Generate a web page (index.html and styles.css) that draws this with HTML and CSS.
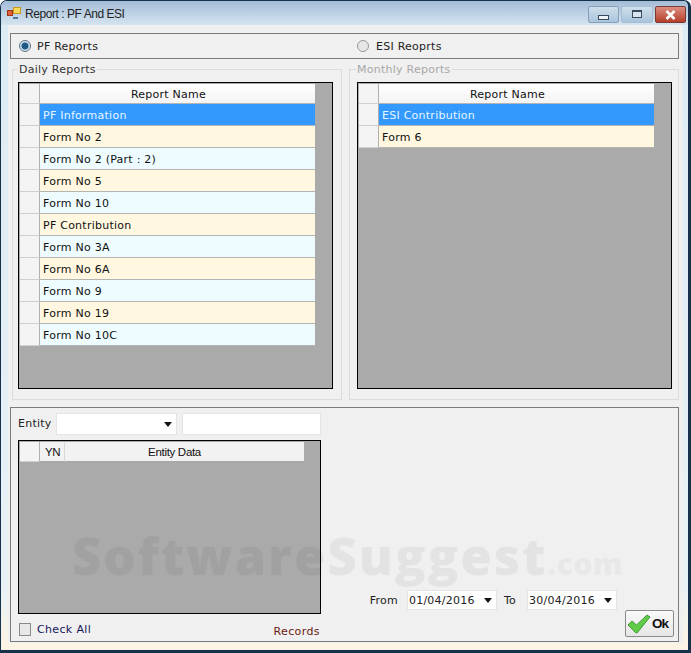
FILE: index.html
```html
<!DOCTYPE html>
<html>
<head>
<meta name="viewport" content="width=device-width, initial-scale=1">
<link rel="stylesheet" href="styles.css">
</head>
<body>

<div class="window">

    <div class="titlebar">
        <svg class="appIcon" width="14" height="13" viewBox="0 0 14 13">
            <rect x="0.5" y="3.5" width="5" height="5" fill="#e0603a" stroke="#9c3418"/>
            <rect x="6.5" y="0.5" width="7" height="6" fill="#fbd75a" stroke="#c79a24"/>
            <rect x="6" y="10" width="5" height="2" fill="#56789c"/>
        </svg>
        <span class="titleText">Report : PF And ESI</span>
        <div class="winBtns">
            <span class="winBtn"><i class="minIcon"></i></span>
            <span class="winBtn maxBtn"><i class="maxIcon"></i></span>
            <span class="winBtn closeBtn">
                <svg width="13" height="10" viewBox="0 0 13 10"><path d="M2.5 1 L10.5 9 M10.5 1 L2.5 9" stroke="#fff" stroke-width="2.6"/></svg>
            </span>
        </div>
    </div>

    <div class="client">

        <div class="radioPanel">
            <label class="radioItem radioFirst"><span class="radio checked"></span>PF Reports</label>
            <label class="radioItem"><span class="radio"></span>ESI Reoprts</label>
        </div>

        <div class="groups">
            <fieldset class="group groupDaily">
                <legend>Daily Reports</legend>
                <div class="grid">
                    <div class="row headRow"><div class="rowHead"></div><div class="cell headCell">Report Name</div></div>
                    <div class="row"><div class="rowHead"></div><div class="cell selected">PF Information</div></div>
                    <div class="row"><div class="rowHead"></div><div class="cell cream">Form No 2</div></div>
                    <div class="row"><div class="rowHead"></div><div class="cell ice">Form No 2 (Part : 2)</div></div>
                    <div class="row"><div class="rowHead"></div><div class="cell cream">Form No 5</div></div>
                    <div class="row"><div class="rowHead"></div><div class="cell ice">Form No 10</div></div>
                    <div class="row"><div class="rowHead"></div><div class="cell cream">PF Contribution</div></div>
                    <div class="row"><div class="rowHead"></div><div class="cell ice">Form No 3A</div></div>
                    <div class="row"><div class="rowHead"></div><div class="cell cream">Form No 6A</div></div>
                    <div class="row"><div class="rowHead"></div><div class="cell ice">Form No 9</div></div>
                    <div class="row"><div class="rowHead"></div><div class="cell cream">Form No 19</div></div>
                    <div class="row"><div class="rowHead"></div><div class="cell ice">Form No 10C</div></div>
                </div>
            </fieldset>

            <fieldset class="group groupMonthly">
                <legend class="disabled">Monthly Reports</legend>
                <div class="grid">
                    <div class="row headRow"><div class="rowHead"></div><div class="cell headCell">Report Name</div></div>
                    <div class="row"><div class="rowHead"></div><div class="cell selected">ESI Contribution</div></div>
                    <div class="row"><div class="rowHead"></div><div class="cell cream">Form 6</div></div>
                </div>
            </fieldset>
        </div>

        <div class="bottomPanel">
            <div class="entityCol">
                <div class="entityRow">
                    <span class="entityLabel">Entity</span>
                    <div class="combo entityCombo"><span class="arrow"></span></div>
                    <div class="textBox"></div>
                </div>
                <div class="grid entityGrid">
                    <div class="row entityHead">
                        <div class="rowHead"></div>
                        <div class="cell ynCell">YN</div>
                        <div class="cell dataCell">Entity Data</div>
                    </div>
                </div>
                <div class="entityFoot">
                    <label class="checkAll"><span class="checkbox"></span>Check All</label>
                    <span class="records">Records</span>
                </div>
            </div>

            <div class="actionCol">
                <div class="dateRow">
                    <span class="fromLabel">From</span>
                    <div class="combo dateCombo">01/04/2016<span class="arrow"></span></div>
                    <span class="toLabel">To</span>
                    <div class="combo dateCombo">30/04/2016<span class="arrow"></span></div>
                </div>
                <button class="okBtn">
                    <svg width="24" height="22" viewBox="0 0 24 22">
                        <path d="M1 12 L5 8 L9.5 12 L20 2 L23 4 L10 20 Q8 20 7 18 Z" fill="#62cc48" stroke="#3f9a34" stroke-width="1"/>
                    </svg>
                    Ok
                </button>
            </div>
        </div>

    </div>

    <!-- stock site watermark over the whole form -->
    <div class="watermark">SoftwareSuggest<span class="wmSmall">.com</span></div>
</div>

</body>
</html>
```
FILE: styles.css
```css
* {
    box-sizing: border-box;
}

body {
    margin: 0;
    font-family: "DejaVu Sans", Verdana, sans-serif;
    font-size: 11px;
    letter-spacing: 0.25px;
    color: #222;
}

.window {
    position: relative;
    width: 691px;
    height: 653px;
    overflow: hidden;
    background: linear-gradient(#dcebf4, #e8f1f6 90%, #fdf4e4);
    border: 1px solid #16314a;
    border-bottom-width: 3px;
    border-right-width: 3px;
    border-radius: 7px 7px 0 0;
}

/* Title bar */
.titlebar {
    display: flex;
    align-items: center;
    height: 24px;
    padding: 0 2px 0 6px;
    background: linear-gradient(#a3bcd6, #c2d5e7 60%, #d5e3ef);
}

.appIcon {
    margin-right: 4px;
}

.titleText {
    margin-top: 2px;
    font-family: "Liberation Sans", Arial, sans-serif;
    font-size: 12px;
    letter-spacing: -0.45px;
    color: #222;
}

.winBtns {
    display: flex;
    gap: 2px;
    margin-left: auto;
    margin-top: 3px;
}

.winBtn {
    display: flex;
    align-items: center;
    justify-content: center;
    width: 31px;
    height: 17px;
    background: linear-gradient(#cfdfec, #a9c4dc);
    border: 1px solid #86a0ba;
    border-radius: 2px;
}

.maxBtn {
    width: 32px;
    border-color: #a6bdd2;
}

.closeBtn {
    width: 31px;
    background: linear-gradient(#dc8e80, #b63e2a);
    border-color: #7c3a30;
}

.minIcon {
    width: 11px;
    height: 5px;
    margin-top: 5px;
    background: #eef3f7;
    border: 1px solid #3a4a5c;
}

.maxIcon {
    width: 10px;
    height: 8px;
    margin-bottom: 2px;
    border: 1px solid #3a4a5c;
    border-top-width: 2px;
    background: #d8e4ee;
}

/* Form area */
.client {
    height: 618px;
    margin: 0 5px 0 7px;
    padding: 8px 4px 0 2px;
    background: #f0f0f0;
}

.radioPanel {
    display: flex;
    align-items: center;
    height: 26px;
    border: 1px solid #7b7b7b;
}

.radioItem {
    display: flex;
    align-items: center;
    gap: 7px;
    padding-top: 1px;
}

.radioFirst {
    width: 346px;
    gap: 6px;
    padding-left: 8px;
}

.radio {
    width: 12px;
    height: 12px;
    margin-top: -1px;
    background: #e6e6e6;
    border: 1px solid #9a9a9a;
    border-radius: 50%;
}

.radio.checked {
    background: radial-gradient(circle, #1d5a86 0 3px, #d8e4ec 4px);
    border-color: #5c7688;
}

.groups {
    display: flex;
    gap: 7px;
    padding-left: 2px;
    margin-top: 4px;
}

.group {
    margin: 0;
    padding: 6px 0 10px 5px;
    border: 1px solid #dcdcdc;
    min-width: 0;
}

.group legend {
    padding: 0 1px;
    line-height: 13px;
    color: #333;
}

.group legend.disabled {
    margin-left: -1px;
    color: #a8a8a8;
}

.groupDaily {
    width: 330px;
}

.groupMonthly {
    width: 330px;
    padding-left: 7px;
}

/* Grids */
.grid {
    width: 315px;
    height: 307px;
    padding: 1px;
    background: #aaaaaa;
    border: 1px solid #000;
}

.row {
    display: flex;
    height: 22px;
}

.headRow {
    height: 20px;
}

.rowHead {
    flex: none;
    width: 20px;
    background: #f4f4f4;
    border-right: 1px solid #b0b0b0;
    border-bottom: 1px solid #d0d0d0;
}

.cell {
    flex: none;
    width: 275px;
    padding: 1px 0 0 3px;
    line-height: 21px;
    color: #111;
    border-bottom: 1px solid #b4b4b4;
}

.headCell {
    padding: 1px 18px 0 0;
    line-height: 19px;
    text-align: center;
    background: linear-gradient(#ffffff, #f4f4f4);
}

.selected {
    background: #3399ff;
    color: #e8f6ff;
}

.cream {
    background: #fff7e0;
}

.ice {
    background: #eefcff;
}

/* Bottom panel */
.bottomPanel {
    display: flex;
    justify-content: space-between;
    height: 235px;
    margin-top: 7px;
    padding: 5px 4px 0 7px;
    border: 1px solid #7b7b7b;
}

.entityCol {
    width: 303px;
}

.entityRow {
    display: flex;
    align-items: center;
    gap: 5px;
    height: 22px;
}

.entityLabel {
    width: 33px;
    margin-top: -2px;
}

.combo {
    display: flex;
    align-items: center;
    position: relative;
    height: 22px;
    padding-left: 3px;
    background: #fff;
    border: 1px solid #e4e4e4;
}

.arrow {
    position: absolute;
    right: 4px;
    top: 8px;
    border: 4px solid transparent;
    border-top: 5px solid #111;
    border-bottom: 0;
}

.entityCombo {
    width: 121px;
}

.textBox {
    width: 139px;
    height: 22px;
    background: #fff;
    border: 1px solid #e4e4e4;
}

.entityGrid {
    width: 303px;
    height: 174px;
    margin-top: 5px;
}

.entityHead {
    height: 20px;
    font-family: "Liberation Sans", Arial, sans-serif;
    font-size: 11.5px;
    letter-spacing: -0.3px;
}

.ynCell {
    width: 25px;
    padding: 0 0 0 5px;
    line-height: 20px;
    background: #f2f2f2;
    border-right: 1px solid #d8d8d8;
    border-bottom: 1px solid #a8a8a8;
}

.dataCell {
    width: 239px;
    padding: 0 20px 0 0;
    line-height: 20px;
    text-align: center;
    background: #f2f2f2;
    border-bottom: 1px solid #a8a8a8;
}

.entityFoot {
    display: flex;
    justify-content: space-between;
    margin-top: 6px;
}

.checkAll {
    display: flex;
    align-items: center;
    gap: 6px;
    margin-left: 1px;
    letter-spacing: 0.35px;
    color: #14145a;
}

.checkbox {
    width: 12px;
    height: 13px;
    background: #e8e8e8;
    border: 1px solid #8a8a8a;
}

.records {
    margin: 5px 1px 0 0;
    letter-spacing: 0.4px;
    color: #6a1a10;
}

.actionCol {
    display: flex;
    flex-direction: column;
    align-items: flex-end;
    justify-content: flex-end;
    padding-bottom: 4px;
}

.dateRow {
    display: flex;
    align-items: center;
    margin-right: 57px;
}

.fromLabel {
    margin-right: 9px;
}

.toLabel {
    margin: 0 11px 0 7px;
}

.dateCombo {
    width: 90px;
    height: 20px;
    padding-left: 1px;
}

.dateCombo .arrow {
    top: 7px;
}

.okBtn {
    display: flex;
    align-items: center;
    gap: 1px;
    width: 49px;
    height: 27px;
    padding: 0 1px;
    background: linear-gradient(#fafafa, #e6e6e6);
    border: 1px solid #8a8a8a;
    border-radius: 2px;
    font-family: "Liberation Sans", Arial, sans-serif;
    font-size: 13.5px;
    font-weight: bold;
    letter-spacing: -1px;
    color: #111;
}

/* Watermark sits over everything */
.watermark {
    position: absolute;
    left: 71px;
    top: 519px;
    font-family: "Open Sans", sans-serif;
    font-size: 51px;
    font-weight: 800;
    line-height: 70px;
    letter-spacing: 1.9px;
    white-space: nowrap;
    color: rgba(0, 0, 0, 0.05);
}

.wmSmall {
    font-size: 30px;
    letter-spacing: 0.5px;
}
```
